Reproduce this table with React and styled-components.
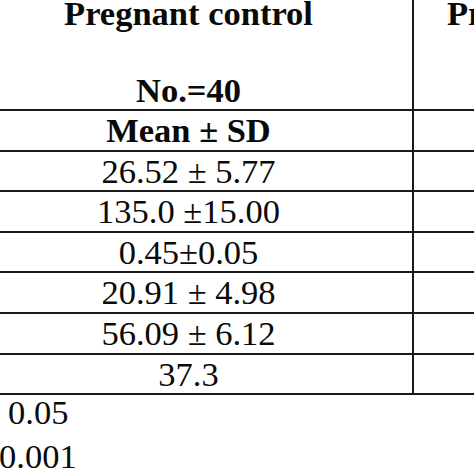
import React from 'react'
import styled, { createGlobalStyle } from 'styled-components'

const GlobalStyle = createGlobalStyle`
  html, body {
    margin: 0;
    padding: 0;
    background: #ffffff;
    overflow: hidden;
  }
  body {
    font-family: "Liberation Serif", "Times New Roman", serif;
    color: #0a0a0a;
  }
`

const Page = styled.div`
  width: 474px;
  height: 474px;
  overflow: hidden;
  background: #ffffff;
`

const Sheet = styled.div`
  margin-left: -35px;
  margin-top: -8.5px;
  width: max-content;
`

const Table = styled.div`
  display: grid;
  grid-template-columns: 449px 380px;
  border-top: 2px solid #1a1a1a;
`

const Cell = styled.div`
  box-sizing: border-box;
  border-right: 2px solid #1a1a1a;
  border-bottom: 2px solid #1a1a1a;
  font-size: 34.5px;
  font-weight: ${p => (p.$bold ? 700 : 400)};
  text-align: ${p => (p.$left ? 'left' : 'center')};
  padding-left: ${p => (p.$left ? '33px' : '0')};
  white-space: nowrap;
  overflow: hidden;
`

const HeadCell = styled(Cell)`
  line-height: 38.5px;
  height: 117.5px;
`

const DataCell = styled(Cell)`
  height: 40.6px;
  line-height: 38.6px;
`

const Notes = styled.div`
  display: flex;
  flex-direction: column;
  gap: 9px;
  font-size: 34.5px;
  line-height: 1;
  white-space: nowrap;
`

const Note = styled.div`
  margin-left: ${p => p.$shift}px;
`

// the prefix sits past the left edge of the crop, only the values show
const Prefix = styled.span`
  margin-right: 17px;
`

const rows = [
  { value: 'Mean ± SD', bold: true },
  { value: '26.52 ± 5.77' },
  { value: '135.0 ±15.00' },
  { value: '0.45±0.05' },
  { value: '20.91 ± 4.98' },
  { value: '56.09 ± 6.12' },
  { value: '37.3' },
]

const App = () => {
  return (
    <Page>
      <GlobalStyle />
      <Sheet>
        <Table>
          <HeadCell $bold>
            Pregnant control
            <br />
            &nbsp;
            <br />
            No.=40
          </HeadCell>
          <HeadCell $bold $left>
            Preeclampsia
          </HeadCell>
          {rows.map((r, i) => (
            <React.Fragment key={i}>
              <DataCell $bold={r.bold}>{r.value}</DataCell>
              <DataCell />
            </React.Fragment>
          ))}
        </Table>
      </Sheet>
      <Notes>
        <Note $shift={-55}><Prefix>P &lt;</Prefix>0.05</Note>
        <Note $shift={-64}><Prefix>P &lt;</Prefix>0.001</Note>
      </Notes>
    </Page>
  )
}

export default App
